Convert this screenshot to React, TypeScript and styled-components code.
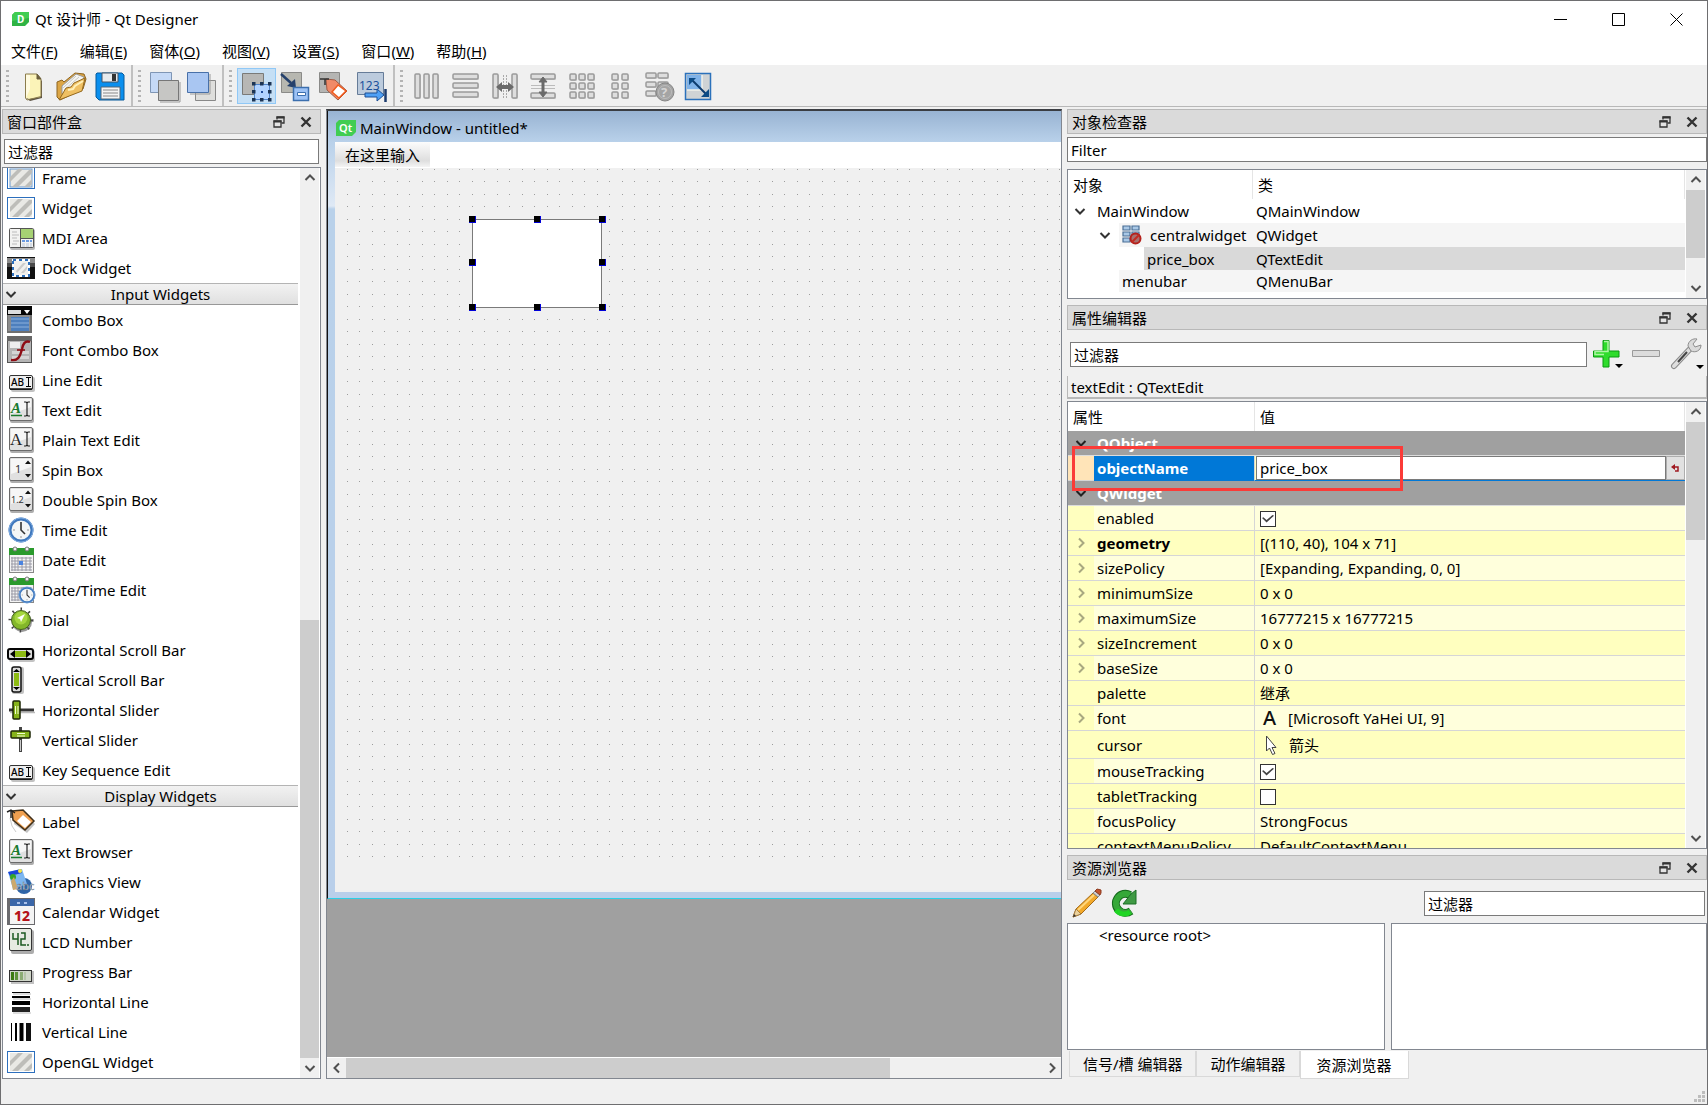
import React from "react";
import styled, { createGlobalStyle, css } from "styled-components";

const Global = createGlobalStyle`
  * { box-sizing: border-box; }
  html, body, #root { margin: 0; height: 100%; }
  body {
    font-family: "Noto Sans", "Noto Sans CJK SC", sans-serif;
    font-size: 15px;
    line-height: 20px;
    color: #000;
    overflow: hidden;
  }
  button, input { font: inherit; color: inherit; }
  button { border: 0; background: none; padding: 0; }
  svg { display: block; flex: none; overflow: visible; }
  svg text { font-family: "Noto Sans", sans-serif; }
`;

/* ---------- window shell ---------- */

const Window = styled.div`
  height: 100vh;
  display: flex;
  flex-direction: column;
  background: #f0f0f0;
  border: 1px solid #6e6e70;
`;

const TitleBar = styled.header`
  height: 34px;
  flex: none;
  display: flex;
  align-items: center;
  background: #fff;
  padding: 2px 2px 0 11px;
`;

const AppTitle = styled.h1`
  flex: 1;
  margin: 0 0 0 6px;
  font-size: 15px;
  font-weight: 400;
  line-height: 20px;
`;

const CaptionButton = styled.button`
  width: 58px;
  height: 32px;
  display: grid;
  place-items: center;
`;

const MenuBar = styled.nav`
  height: 30px;
  flex: none;
  display: flex;
  align-items: flex-end;
  background: #fff;
`;

const MenuItem = styled.button`
  padding: 0 12px 0 10px;
  height: 28px;
`;

const ToolBar = styled.div`
  height: 42px;
  flex: none;
  display: flex;
  border-bottom: 1px solid #b8b8b8;
`;

const ToolGroup = styled.div<{ $last?: boolean }>`
  display: flex;
  align-items: center;
  padding: 0 2px 0 5px;
  border-right: ${(p) => (p.$last ? "0" : "2px solid #c0c0c0")};
`;

const Handle = styled.span`
  width: 3px;
  height: 32px;
  margin-right: 5px;
  background: repeating-linear-gradient(#b4b4b4 0 2px, transparent 2px 5px);
`;

const ToolButtons = styled.div<{ $count: number; $width: number }>`
  display: grid;
  grid-template-columns: repeat(${(p) => p.$count}, 1fr);
  width: ${(p) => p.$width}px;
`;

const ToolButton = styled.button<{ $active?: boolean }>`
  height: 36px;
  display: grid;
  place-items: center;
  ${(p) =>
    p.$active &&
    css`
      background: #c5dff5;
      box-shadow: inset 0 0 0 1px #90c8f6;
    `}
`;

const Workspace = styled.main`
  flex: 1;
  min-height: 0;
  display: grid;
  grid-template-columns: 319px minmax(0, 1fr) 640px;
  gap: 5px;
  padding: 2px 0 0 1px;
`;

const StatusBar = styled.footer`
  height: 25px;
  flex: none;
  display: flex;
  justify-content: flex-end;
  align-items: flex-end;
  padding: 1px 2px;
`;

/* ---------- docks ---------- */

const Column = styled.div`
  min-width: 0;
  min-height: 0;
  display: flex;
  flex-direction: column;
`;

const Dock = styled.section<{ $grow?: boolean }>`
  display: flex;
  flex-direction: column;
  flex: ${(p) => (p.$grow ? "1" : "none")};
  min-height: 0;
`;

const DockTitleBar = styled.div`
  height: 25px;
  flex: none;
  display: flex;
  align-items: center;
  gap: 15px;
  padding: 1px 8px 0 4px;
  background: #dadada;
  border: 1px solid #b8b8b8;
`;

const DockTitle = styled.h2`
  flex: 1;
  margin: 0;
  font-size: 15px;
  font-weight: 400;
  line-height: 20px;
`;

const IconButton = styled.button`
  display: block;
`;

const Filter = styled.input<{ $width?: string }>`
  height: 25px;
  flex: none;
  width: ${(p) => p.$width || "auto"};
  min-width: 0;
  padding: 0 3px;
  border: 1px solid #7a7a7a;
  background: #fff;
  outline: 0;
`;

const FilterRow = styled.div<{ $space: string }>`
  display: flex;
  flex: none;
  padding: ${(p) => p.$space};
`;

const View = styled.div<{ $grow?: boolean; $height?: number }>`
  display: flex;
  ${(p) => (p.$grow ? "flex: 1; min-height: 0;" : `flex: none; height: ${p.$height}px;`)}
  background: #fff;
  border: 1px solid #828790;
  overflow: hidden;
`;

/* ---------- scroll bars ---------- */

const ScrollTrack = styled.div<{ $horizontal?: boolean }>`
  flex: none;
  display: flex;
  flex-direction: ${(p) => (p.$horizontal ? "row" : "column")};
  ${(p) => (p.$horizontal ? "height: 21px; border-top: 1px solid #fff;" : "width: 20px; border-right: 1px solid #fff;")}
  background: #f0f0f0;
`;

const ScrollArrow = styled.button`
  width: 19px;
  height: 20px;
  flex: none;
  display: grid;
  place-items: center;
`;

const ScrollPart = styled.span<{ $size: number; $thumb?: boolean }>`
  flex: ${(p) => p.$size} 1 0;
  background: ${(p) => (p.$thumb ? "#cdcdcd" : "transparent")};
`;

type Dir = "up" | "down" | "left" | "right";
const turn: Record<Dir, number> = { down: 0, left: 90, up: 180, right: 270 };

const Chevron = ({ dir, color = "#505050" }: { dir: Dir; color?: string }) => (
  <svg width="12" height="12" viewBox="0 0 12 12">
    <path d="M1.5 4 6 8.5 10.5 4" fill="none" stroke={color} strokeWidth="2" transform={`rotate(${turn[dir]} 6 6)`} />
  </svg>
);

const ScrollBar = ({ parts, horizontal }: { parts: [number, number, number]; horizontal?: boolean }) => (
  <ScrollTrack $horizontal={horizontal}>
    <ScrollArrow aria-label={horizontal ? "left" : "up"}>
      <Chevron dir={horizontal ? "left" : "up"} />
    </ScrollArrow>
    <ScrollPart $size={parts[0]} />
    <ScrollPart $size={parts[1]} $thumb />
    <ScrollPart $size={parts[2]} />
    <ScrollArrow aria-label={horizontal ? "right" : "down"}>
      <Chevron dir={horizontal ? "right" : "down"} />
    </ScrollArrow>
  </ScrollTrack>
);

const DockHeader = ({ title }: { title: string }) => (
  <DockTitleBar>
    <DockTitle>{title}</DockTitle>
    <IconButton aria-label="float">
      <svg width="12" height="12" viewBox="0 0 12 12">
        <path d="M4 3.5V1h7v6H8.5" fill="none" stroke="#333" strokeWidth="1.3" />
        <path d="M3.5 1.5h8" stroke="#333" strokeWidth="2" />
        <path d="M1 5h7v6H1z" fill="#e4e4e4" stroke="#333" strokeWidth="1.3" />
        <path d="M.5 5.500h8" stroke="#333" strokeWidth="2" />
      </svg>
    </IconButton>
    <IconButton aria-label="close">
      <svg width="12" height="12" viewBox="0 0 12 12">
        <path d="M1.5 1.5l9 9M10.5 1.5l-9 9" stroke="#333" strokeWidth="2.4" />
      </svg>
    </IconButton>
  </DockTitleBar>
);

/* ---------- widget box ---------- */

const WidgetList = styled.div`
  flex: 1;
  min-width: 0;
  display: flex;
  flex-direction: column;
  justify-content: flex-end;
  padding: 0 2px 1px 0;
  overflow: hidden;
`;

const Category = styled.button`
  height: 22px;
  flex: none;
  display: flex;
  align-items: center;
  padding: 0 2px;
  background: linear-gradient(#f2f2f2, #e0e0e0);
  border-top: 1px solid #b4b4b4;
  border-bottom: 1px solid #989898;
`;

const CategoryName = styled.span`
  flex: 1;
  line-height: 20px;
  padding-left: 8px;
`;

const WidgetRow = styled.div`
  height: 30px;
  flex: none;
  display: flex;
  align-items: center;
  gap: 7px;
  padding-left: 4px;
  white-space: nowrap;
`;

const Svg28 = ({ children }: { children: React.ReactNode }) => (
  <svg width="28" height="28" viewBox="0 0 28 28">
    {children}
  </svg>
);

const Striped = ({ framed }: { framed?: boolean }) => (
  <Svg28>
    <rect x=".5" y="3.5" width="27" height="21" fill="#fff" stroke="#2c6fbd" />
    <rect x="3" y="5" width="22" height="18" fill="#e9e9e5" stroke={framed ? "#6d9bd0" : "none"} />
    <path d="M3 13l8-8h5L3 18zM5 23 22 6h3v3L11 23zM17 23l8-8v5l-3 3z" fill="#bdbdb9" />
  </Svg28>
);

const Plate = ({ children }: { children: React.ReactNode }) => (
  <Svg28>
    <rect x="3" y="2" width="24" height="25" rx="2" fill="#777" opacity=".6" />
    <rect x="2.5" y="1.5" width="23" height="23" rx="1.5" fill="#e0e0e0" stroke="#6a6a6a" />
    <path d="M4 3h20v8L4 18z" fill="#f6f6f6" />
    {children}
  </Svg28>
);

const IBeam = ({ x }: { x: number }) => (
  <path d={`M${x - 3} 6h2l1 1 1-1h2M${x} 7v12M${x - 3} 20h2l1-1 1 1h2`} fill="none" stroke="#222" strokeWidth="1.2" />
);

const AbiIcon = () => (
  <Svg28>
    <rect x="4" y="11" width="24" height="15" rx="2" fill="#999" opacity=".6" />
    <rect x="2.5" y="9.5" width="23" height="14" rx="1.5" fill="#eee" stroke="#333" />
    <path d="M3 23h22" stroke="#111" strokeWidth="1.5" />
    <text x="4" y="20" fontSize="10" fontWeight="500" fill="#000">AB</text>
    <path d="M19 11.5h5M21.5 12v8M19 20.5h5" stroke="#000" fill="none" />
  </Svg28>
);

const TextIcon = () => (
  <Plate>
    <text x="4" y="17" fontSize="15" fontStyle="italic" fill="#1a7a2e" style={{ fontFamily: "Liberation Serif" }} fontWeight="700">A</text>
    <path d="M4 19.5h11" stroke="#1a7a2e" strokeWidth="1.5" />
    <IBeam x={20} />
  </Plate>
);

const PlainIcon = () => (
  <Plate>
    <text x="3" y="19" fontSize="17" fill="#222" style={{ fontFamily: "Liberation Serif" }}>A</text>
    <IBeam x={20} />
  </Plate>
);

const SpinIcon = ({ n }: { n: string }) => (
  <Plate>
    <text x={n.length > 1 ? 4 : 8} y="17" fontSize={n.length > 1 ? 9 : 11} fill="#333">{n}</text>
    <path d="M18 8l3-3.5L24 8zM18 18l3 3.5 3-3.5z" fill="#111" />
  </Plate>
);

const Clock = ({ x, y, r }: { x: number; y: number; r: number }) => (
  <g transform={`translate(${x} ${y}) scale(${r / 12})`}>
    <circle r="11" fill="#f4f6f6" stroke="#3f78bd" strokeWidth="3" />
    <circle r="12" fill="none" stroke="#7fabe0" strokeWidth="1" />
    <path d="M0-8V0l4 4" fill="none" stroke="#333" strokeWidth="1.6" />
    <path d="M0 6v2M-8 0h2M6 0h2" stroke="#999" />
  </g>
);

const Calendar = () => (
  <g>
    <rect x="2.5" y="5" width="24" height="21.5" fill="#f4f4f4" stroke="#888" />
    <rect x="2" y="2" width="25" height="7" fill="#2a9a2c" />
    <path d="M4 12h21M4 15h21M4 18h21M4 21h21M4 24h21M5 11v14M8 11v14M11 11v14M15 11v14M19 11v14M23 11v14" stroke="#9a9aa6" strokeWidth="1" />
    <rect x="12" y="15" width="4" height="4" fill="#4a83e0" />
    <circle cx="8" cy="3" r="2" fill="#eee" stroke="#777" />
    <circle cx="20" cy="3" r="2" fill="#eee" stroke="#777" />
  </g>
);

const TagIcon = () => (
  <Svg28>
    <path d="M8 8l10-2 10 10-8 9-13-9z" fill="#888" opacity=".5" />
    <path d="M5 3l11-1 11 11-9 9L6 12z" fill="#f0a050" stroke="#40301a" strokeWidth="1.5" />
    <path d="M16 7l8 7-6 6-8-7z" fill="#fff" />
    <path d="M0 4l4-2 4 3M4 3v7" fill="none" stroke="#222" strokeWidth="1.4" />
    <path d="M3 10l2 8 4 6" fill="none" stroke="#ccc" />
  </Svg28>
);

const icons: Record<string, React.ReactNode> = {
  frame: <Striped framed />,
  stripe: <Striped />,
  mdi: (
    <Svg28>
      <rect x="3" y="5" width="25" height="21" rx="2" fill="#888" opacity=".6" />
      <rect x="2.5" y="4.5" width="24" height="19" rx="1" fill="#f3f3f1" stroke="#555" />
      <path d="M5 8h5M5 11h7M5 14h5M6 17h6M5 20h5" stroke="#bbb" />
      <rect x="14" y="5" width="12" height="9" fill="#a6d173" />
      <path d="M13.5 5v18M14 14.5h12" stroke="#555" />
      <path d="M15 17h10" stroke="#6a9ae0" strokeWidth="2" strokeDasharray="3 1" />
      <path d="M15 20h10M15 22h10" stroke="#b9c6da" strokeDasharray="3 1" />
    </Svg28>
  ),
  dock: (
    <Svg28>
      <path d="M0 3h28v22H0z" fill="#111" />
      <path d="M0 4h28v5H0z" fill="#8a8a8a" />
      <path d="M0 9h28v4H0z" fill="#4a4a4a" />
      <rect x="5" y="5" width="18" height="18" fill="#f0f0ee" />
      <rect x="6" y="6" width="16" height="16" fill="none" stroke="#fff" strokeWidth="2" />
      <rect x="6" y="6" width="16" height="16" fill="none" stroke="#2c6fbd" strokeWidth="2" strokeDasharray="3 3" />
      <path d="M9 17l7-8h3l-9 10zM14 19l6-7v3l-3 4z" fill="#ccc" />
    </Svg28>
  ),
  combo: (
    <Svg28>
      <rect width="25" height="27" fill="#6f6f6f" />
      <rect x="1" y="9" width="22" height="16" fill="#8c8c8c" />
      <rect width="25" height="9" fill="#050505" />
      <rect x="1" y="4" width="13" height="4" fill="#ddd" />
      <path d="M17 4h6l-3 4z" fill="#fff" />
      <rect x="4" y="11" width="18" height="14" fill="#4d7fbd" />
      <path d="M4 13h18M4 17h18M4 21h18" stroke="#8db1dc" />
    </Svg28>
  ),
  fontcombo: (
    <Svg28>
      <rect x=".5" y=".5" width="24" height="26" fill="#b4b4b4" stroke="#555" />
      <rect width="25" height="5" fill="#666" />
      <rect x="3" y="6" width="10" height="6" fill="#eee" />
      <path d="M5 15h17v3H5zM5 20h17v3H5z" fill="#d5d5d5" />
      <path d="M23 6c-5-2-7 2-8 7-2 8-4 12-11 11" fill="none" stroke="#8e0c14" strokeWidth="2.4" />
      <path d="M10 14h8" stroke="#8e0c14" strokeWidth="1.6" />
    </Svg28>
  ),
  abi: <AbiIcon />,
  text: <TextIcon />,
  plain: <PlainIcon />,
  spin: <SpinIcon n="1" />,
  dspin: <SpinIcon n="1.2" />,
  time: <Svg28><Clock x={14} y={14} r={12} /></Svg28>,
  date: <Svg28><Calendar /></Svg28>,
  datetime: <Svg28><Calendar /><Clock x={20} y={19} r={8} /></Svg28>,
  dial: (
    <Svg28>
      <circle cx="15" cy="16" r="10" fill="#555" opacity=".6" />
      <circle cx="14" cy="14" r="11" fill="none" stroke="#444" strokeWidth="3" strokeDasharray="1.5 7" />
      <circle cx="14" cy="14" r="9.5" fill="#83b72a" stroke="#45651a" />
      <circle cx="14" cy="12" r="6.5" fill="#a5d63f" />
      <path d="M18 8l-8 4 3 1 1 3z" fill="#fff" />
    </Svg28>
  ),
  hscroll: (
    <Svg28>
      <rect x="2" y="14" width="26" height="12" rx="2" fill="#888" opacity=".5" />
      <rect x="1" y="13" width="25" height="10" rx="2" fill="#ddd" stroke="#050505" strokeWidth="2" />
      <path d="M8 14v8l-5-4zM19 14v8l5-4z" fill="#000" />
      <rect x="8" y="15" width="11" height="6" fill="#8dbb12" />
    </Svg28>
  ),
  vscroll: (
    <Svg28>
      <rect x="5" y="1" width="12" height="27" rx="2" fill="#888" opacity=".5" />
      <rect x="5" y="1" width="9" height="25" rx="2" fill="#ddd" stroke="#111" strokeWidth="1.5" />
      <path d="M6 6h7L9.5 3zM6 21h7l-3.5 3z" fill="#000" />
      <rect x="7" y="7" width="5" height="13" fill="#8dbb12" />
    </Svg28>
  ),
  hslider: (
    <Svg28>
      <path d="M2 14h25" stroke="#333" strokeWidth="3" />
      <path d="M3 16.5h25" stroke="#bbb" strokeWidth="1.5" />
      <rect x="6" y="5" width="7" height="18" rx="1" fill="#86b41a" stroke="#1c2605" strokeWidth="1.5" />
      <path d="M8.5 10v8M11 10v8" stroke="#f2ffd0" />
    </Svg28>
  ),
  vslider: (
    <Svg28>
      <path d="M13.5 1v25" stroke="#444" strokeWidth="3" />
      <path d="M13.5 14v11" stroke="#ccc" strokeWidth="1" />
      <rect x="4" y="5" width="19" height="7" rx="1" fill="#86b41a" stroke="#1c2605" strokeWidth="1.5" />
      <path d="M10 7.5h8M10 10h8" stroke="#f2ffd0" />
    </Svg28>
  ),
  label: <TagIcon />,
  graphics: (
    <Svg28>
      <circle cx="17" cy="18" r="8" fill="#2f65a8" />
      <path d="M1 4l14-3 5 15-14 5z" fill="#7db7f0" />
      <path d="M1 4l13-3 1 4L3 8z" fill="#1c46d8" />
      <circle cx="6" cy="9" r="3" fill="#35a52a" />
      <circle cx="13" cy="3" r="2" fill="#f5e642" />
      <path d="M4 13l3-4 3 9 1 3-5 1z" fill="#cda96b" />
      <text x="9" y="22" fontSize="11" fill="#dfe6ee" stroke="#567" strokeWidth=".4">abc</text>
    </Svg28>
  ),
  calendar: (
    <Svg28>
      <rect width="28" height="27" fill="#6a6a6e" />
      <rect x="3" y="2" width="24" height="24" fill="#f4f4f4" />
      <rect x="3" y="1" width="24" height="7" fill="#3a66a8" />
      <path d="M10 5h3M17 5h3" stroke="#cfe0ff" strokeWidth="1.5" />
      <text x="7" y="23" fontSize="14" fontWeight="800" fill="#b51218">12</text>
    </Svg28>
  ),
  lcd: (
    <Svg28>
      <rect x="4" y="2" width="23" height="24" rx="2" fill="#777" opacity=".6" />
      <rect x="2.5" y=".5" width="22" height="22" rx="1.5" fill="#e6eae2" stroke="#333" />
      <path d="M6 5v6h5M11 5v12M14 5h4v6h-4v6h5" fill="none" stroke="#1b5a20" strokeWidth="1.5" />
      <path d="M20 17h2" stroke="#1b5a20" strokeWidth="1.5" />
    </Svg28>
  ),
  progress: (
    <Svg28>
      <rect x="4" y="13" width="23" height="13" fill="#999" opacity=".6" />
      <rect x="2.5" y="12.5" width="22" height="11" fill="#cfd5c8" stroke="#333" />
      <path d="M4 14h3v8H4z" fill="#3d7a12" />
      <path d="M8 14h3v8H8z" fill="#5e9238" />
      <path d="M13 14h3v8h-3z" fill="#8bab74" />
      <path d="M17 14h2v8h-2z" fill="#b4c4a8" />
    </Svg28>
  ),
  hline: (
    <Svg28>
      <path d="M6 6h18M6 11h18M6 25h18" stroke="#bbb" />
      <path d="M5 4.500h18" stroke="#000" />
      <path d="M5 9h18" stroke="#000" strokeWidth="2" />
      <path d="M5 15h18" stroke="#000" strokeWidth="4" />
      <path d="M5 21.5h18" stroke="#222" strokeWidth="5" />
    </Svg28>
  ),
  vline: (
    <Svg28>
      <path d="M4.5 5v18" stroke="#000" />
      <path d="M9 5v18" stroke="#000" strokeWidth="2" />
      <path d="M14.5 5v18" stroke="#000" strokeWidth="4" />
      <path d="M21.5 5v18" stroke="#111" strokeWidth="5" />
    </Svg28>
  ),
};

const sections: { title?: string; items: [string, string][] }[] = [
  { items: [["frame", "Frame"], ["stripe", "Widget"], ["mdi", "MDI Area"], ["dock", "Dock Widget"]] },
  {
    title: "Input Widgets",
    items: [
      ["combo", "Combo Box"], ["fontcombo", "Font Combo Box"], ["abi", "Line Edit"], ["text", "Text Edit"],
      ["plain", "Plain Text Edit"], ["spin", "Spin Box"], ["dspin", "Double Spin Box"], ["time", "Time Edit"],
      ["date", "Date Edit"], ["datetime", "Date/Time Edit"], ["dial", "Dial"], ["hscroll", "Horizontal Scroll Bar"],
      ["vscroll", "Vertical Scroll Bar"], ["hslider", "Horizontal Slider"], ["vslider", "Vertical Slider"],
      ["abi", "Key Sequence Edit"],
    ],
  },
  {
    title: "Display Widgets",
    items: [
      ["label", "Label"], ["text", "Text Browser"], ["graphics", "Graphics View"], ["calendar", "Calendar Widget"],
      ["lcd", "LCD Number"], ["progress", "Progress Bar"], ["hline", "Horizontal Line"], ["vline", "Vertical Line"],
      ["stripe", "OpenGL Widget"],
    ],
  },
];

const WidgetBox = () => (
  <Column>
    <DockHeader title="窗口部件盒" />
    <FilterRow $space="5px 2px 3px">
      <Filter $width="100%" aria-label="过滤器" defaultValue="过滤器" />
    </FilterRow>
    <View $grow>
      <WidgetList>
        {sections.map((s, i) => (
          <React.Fragment key={i}>
            {s.title && (
              <Category>
                <Chevron dir="down" color="#333" />
                <CategoryName>{s.title}</CategoryName>
              </Category>
            )}
            {s.items.map(([icon, name]) => (
              <WidgetRow key={name}>
                {icons[icon]}
                {name}
              </WidgetRow>
            ))}
          </React.Fragment>
        ))}
      </WidgetList>
      <ScrollBar parts={[431, 438, 0]} />
    </View>
  </Column>
);

/* ---------- tool bar ---------- */

const Svg32 = ({ children }: { children: React.ReactNode }) => (
  <svg width="32" height="32" viewBox="0 0 32 32">
    {children}
  </svg>
);

const Bar = ({ x, y, w, h }: { x: number; y: number; w: number; h: number }) => (
  <g>
    <rect x={x + 1} y={y + 1} width={w} height={h} rx="1" fill="#cfcfcf" />
    <rect x={x} y={y} width={w} height={h} rx="1" fill="#dedede" stroke="#9a9a9a" strokeWidth="1.5" />
  </g>
);

const fileTools = [
  <Svg32>
    <path d="M9 28l4 3 12-3V10z" fill="#5a5142" />
    <path d="M9 4h11l4 5v18l-12 2-3-1z" fill="#fbf3b8" />
    <path d="M9 4l4 1v14l-4 9z" fill="#fffbe0" />
    <path d="M8.5 4H20l4 5v17.5L10 30l-1.5-2z" fill="none" stroke="#8b7c4c" />
    <path d="M20 4l4 5h-4z" fill="#6b5f3c" stroke="#6b5f3c" />
  </Svg32>,
  <Svg32>
    <path d="M2 12l5-2 2 2L20 3l9 1 2 5-3 10L5 30l-3-3z" fill="#dca646" stroke="#8d6420" />
    <path d="M7 16L21 4l8 3-4 9-18 8z" fill="#f5f5f2" stroke="#999" />
    <path d="M8 18l13-12M9 20L24 7" stroke="#c9c9c4" />
    <path d="M4 30l7-12 5-1 3-4 11-5-3 13z" fill="#efc063" stroke="#94691f" />
    <path d="M13 20l5-1 2-3 8-5" fill="none" stroke="#fff0b8" strokeWidth="2" />
  </Svg32>,
  <Svg32>
    <path d="M3 3h25l2 2v25H5l-3-3V4z" fill="#0a8fee" stroke="#075a9c" />
    <path d="M8 3h16v9H8z" fill="#e7ebee" stroke="#456" />
    <path d="M18 4h4v7h-4z" fill="#333" />
    <path d="M7 17h19v12H7z" fill="#f4f4f4" stroke="#567" />
    <path d="M9 20h15M9 23h15M9 26h15" stroke="#888" />
  </Svg32>,
];

const editTools = [
  <Svg32>
    <path d="M1.5 2.5h21v20h-21z" fill="#c5d9f6" stroke="#7f96b5" />
    <path d="M9.5 10.5h20v20h-20z" fill="#c6c6c4" stroke="#777" />
    <path d="M31 12v20H11" fill="none" stroke="#999" />
  </Svg32>,
  <Svg32>
    <path d="M9.5 10.5h20v20h-20z" fill="#dededc" stroke="#888" />
    <path d="M1.5 2.5h21v20h-21z" fill="#a9c6f2" stroke="#4870a8" />
    <path d="M24 4v20H4" fill="none" stroke="#999" />
  </Svg32>,
];

const modeTools = [
  <Svg32>
    <path d="M2.5 3.5h21v21h-21z" fill="#b7b7b5" stroke="#7a7a78" />
    <path d="M14.5 14.5h15v15h-15z" fill="#b2d3ff" stroke="#4f82c8" />
    {[[14, 14], [22, 14], [30, 14], [14, 22], [30, 22], [14, 30], [22, 30], [30, 30]].map(([x, y]) => (
      <rect key={`${x}-${y}`} x={x - 2} y={y - 2} width="3.500" height="3.500" fill="#1c3454" />
    ))}
    <path d="M21 21h2v2h-2z" fill="#1c4a9a" />
  </Svg32>,
  <Svg32>
    <path d="M2.5 2.5h20v20h-20z" fill="#b7b7b0" stroke="#8a8a88" />
    <path d="M2 4l10 9" stroke="#25406b" strokeWidth="2.5" />
    <path d="M16 9l1 9-9-2z" fill="#25406b" />
    <path d="M14.500 17.500h15v13h-15z" fill="#9dc2f5" stroke="#3c6fae" strokeWidth="1.500" />
    <path d="M18.500 22.500h8v3h-8z" fill="#fff" stroke="#3c6fae" />
  </Svg32>,
  <Svg32>
    <path d="M2.500 2.500h20v20h-20z" fill="#b5b5b3" stroke="#8a8a88" />
    <path d="M9 9l9 1 12 11-9 9-11-10z" fill="#f08a68" stroke="#a05a44" />
    <path d="M21 15l8 6-7 7-7-6z" fill="#fff" stroke="#f05a1c" strokeWidth="1.500" />
    <path d="M3 9h9M8 9v6" stroke="#333" strokeWidth="1.500" />
  </Svg32>,
  <Svg32>
    <path d="M1.500 2.500h26v22h-26z" fill="#bccbdd" stroke="#667c98" />
    <text x="3" y="20" fontSize="12" fill="#1b519c">123</text>
    <path d="M9 23h12v-4l7 6-7 6v-4H9z" fill="#4fa0f5" stroke="#1c4f94" />
    <path d="M29.500 19v13" stroke="#1c3b6e" strokeWidth="2.500" />
  </Svg32>,
];

const rowsOf = (xs: number[], ys: number[], w: number, h: number) =>
  ys.flatMap((y) => xs.map((x) => <Bar key={`${x}-${y}`} x={x} y={y} w={w} h={h} />));

const layoutTools = [
  <Svg32>{rowsOf([4, 13, 22], [4], 5, 24)}</Svg32>,
  <Svg32>{rowsOf([3], [4, 13, 22], 25, 5)}</Svg32>,
  <Svg32>
    {rowsOf([4, 23], [4], 5, 24)}
    <path d="M14.5 5v24M17.5 5v24" stroke="#aaa" strokeDasharray="2 1" />
    <path d="M7 17l6-5v3h6v-3l6 5-6 5v-3h-6v3z" fill="#6a6a6a" />
  </Svg32>,
  <Svg32>
    {rowsOf([4], [4, 23], 24, 5)}
    <path d="M4 15.5h24M4 18.5h24" stroke="#bbb" />
    <path d="M16 7l4 5h-3v10h3l-4 5-4-5h3V12h-3z" fill="#6a6a6a" stroke="#6a6a6a" />
  </Svg32>,
  <Svg32>{rowsOf([4, 13, 22], [4, 13, 22], 6, 6)}</Svg32>,
  <Svg32>{rowsOf([8, 18], [4, 13, 22], 6, 6)}</Svg32>,
  <Svg32>
    {rowsOf([3, 15], [3, 12, 21], 10, 5)}
    <circle cx="22" cy="22" r="9" fill="#a4a4a4" stroke="#858585" />
    <circle cx="22" cy="22" r="6.500" fill="none" stroke="#bcbcbc" />
    <text x="18" y="27" fontSize="13" fontWeight="700" fill="#d5d5d5">?</text>
  </Svg32>,
  <Svg32>
    <path d="M3.500 3.500h25v26h-25z" fill="#cfd3d5" stroke="#2b71bb" strokeWidth="1.500" />
    <path d="M5 5h15v15H5z" fill="#7fb2e8" />
    <path d="M20 5v15H5" fill="none" stroke="#f2f2ea" strokeWidth="1.500" />
    <path d="M10 10l14 14" stroke="#0d3c6e" strokeWidth="2" />
    <path d="M7 8h7l-7 7zM27 27v-8l-8 8z" fill="#0d4c86" />
  </Svg32>,
];

const groups = [
  { name: "file", width: 115, items: fileTools },
  { name: "edit", width: 74, items: editTools },
  { name: "mode", width: 154, items: modeTools },
  { name: "layout", width: 309, items: layoutTools },
];

/* ---------- form area ---------- */

const MdiArea = styled.section`
  min-width: 0;
  display: flex;
  flex-direction: column;
  background: #a0a0a0;
  border: 1px solid #828790;
  border-top: 2px solid #3a3d42;
`;

const FormWindow = styled.div`
  height: 788px;
  flex: none;
  display: flex;
  flex-direction: column;
  padding: 0 0 6px 7px;
  background: linear-gradient(#98b3d2, #b9d1ea 31px, #dfe9f5 95px, #b9d1ea 98px, #b9cfea);
  border-left: 1px solid #111;
  border-bottom: 1px solid #2bd0e6;
`;

const FormTitle = styled.div`
  height: 31px;
  flex: none;
  display: flex;
  align-items: center;
  gap: 4px;
  margin-left: -7px;
  padding: 2px 0 0 8px;
  background: linear-gradient(#98b3d2, #b9d1ea);
`;

const FormMenu = styled.div`
  height: 26px;
  flex: none;
  background: #fff;
`;

const MenuStub = styled.button`
  height: 25px;
  padding: 0 10px;
  background: linear-gradient(#fcfcfc, #dedede 75%, #f4f4f4);
`;

const dot = "conic-gradient(from 270deg at 1px 1px, #9c9c9c 90deg, transparent 0)";

const Canvas = styled.div`
  position: relative;
  flex: 1;
  background-color: #f0f0f0;
  background-image: ${dot}, ${dot}, ${dot}, ${dot};
  background-size: 25px 25px;
  background-position: 12px 1px, 24px 1px, 12px 13px, 24px 13px;
`;

const FormStatus = styled.div`
  height: 31px;
  flex: none;
  background: #f0f0f0;
`;

const FormTextEdit = styled.textarea`
  position: absolute;
  left: 137px;
  top: 51px;
  width: 130px;
  height: 89px;
  border: 1px solid #7a7a7a;
  background: #fff;
  resize: none;
  outline: 0;
`;

const Grip = styled.span<{ $x: number; $y: number }>`
  position: absolute;
  left: ${(p) => p.$x}px;
  top: ${(p) => p.$y}px;
  width: 7px;
  height: 7px;
  background: #000;
  border-right: 1px solid #0000d8;
  border-bottom: 1px solid #0000d8;
`;

const grips: [number, number][] = [
  [134, 48], [199, 48], [264, 48], [134, 91], [264, 91], [134, 136], [199, 136], [264, 136],
];

const MdiSpace = styled.div`
  flex: 1;
`;

const QtBadge = () => (
  <svg width="20" height="16" viewBox="0 0 20 16">
    <path d="M3 0h17v12l-4 4H0V3z" fill="#41cd52" />
    <text x="3" y="12" fontSize="11" fontWeight="600" fill="#fff">Qt</text>
  </svg>
);

const FormArea = () => (
  <MdiArea>
    <FormWindow>
      <FormTitle>
        <QtBadge />
        MainWindow - untitled*
      </FormTitle>
      <FormMenu>
        <MenuStub>在这里输入</MenuStub>
      </FormMenu>
      <Canvas>
        <FormTextEdit aria-label="price_box" />
        {grips.map(([x, y]) => (
          <Grip key={`${x}-${y}`} $x={x} $y={y} />
        ))}
      </Canvas>
      <FormStatus />
    </FormWindow>
    <MdiSpace />
    <ScrollBar horizontal parts={[0, 541, 151]} />
  </MdiArea>
);

/* ---------- object inspector ---------- */

const Gap = styled.div<{ $h: number }>`
  height: ${(p) => p.$h}px;
  flex: none;
`;

const TableClip = styled.div`
  position: relative;
  flex: 1;
  min-width: 0;
  overflow: hidden;
  padding-right: 1px;
`;

const Table = styled.table`
  width: 100%;
  table-layout: fixed;
  border-spacing: 0;
  th, td { padding: 0; overflow: hidden; white-space: nowrap; }
`;

const HeadCell = styled.th<{ $width?: number }>`
  height: 29px;
  width: ${(p) => (p.$width ? `${p.$width}px` : "auto")};
  text-align: left;
  font-weight: 400;
  border-right: 1px solid #e5e5e5;
`;

const HeadLabel = styled.span`
  padding-left: 5px;
`;

const TreeRow = styled.tr<{ $h: number }>`
  height: ${(p) => p.$h}px;
`;

const TreeCell = styled.div<{ $h: number }>`
  height: ${(p) => p.$h}px;
  display: flex;
`;

const Branch = styled.span<{ $depth: number }>`
  width: ${(p) => 26 + p.$depth * 25}px;
  flex: none;
  display: flex;
  align-items: center;
  justify-content: flex-end;
  padding-right: 8px;
`;

const Node = styled.span<{ $bg: string }>`
  flex: 1;
  min-width: 0;
  display: flex;
  align-items: center;
  gap: 8px;
  padding-left: 3px;
  background: ${(p) => p.$bg};
`;

const ClassCell = styled.td<{ $bg: string }>`
  background: ${(p) => p.$bg};
`;

const ClassName = styled.span`
  padding-left: 3px;
`;

const objects = [
  { name: "MainWindow", cls: "QMainWindow", depth: 0, h: 24, bg: "#fff", open: true },
  { name: "centralwidget", cls: "QWidget", depth: 1, h: 24, bg: "#f5f5f5", open: true, icon: true },
  { name: "price_box", cls: "QTextEdit", depth: 2, h: 23, bg: "#d9d9d9" },
  { name: "menubar", cls: "QMenuBar", depth: 1, h: 22, bg: "#f5f5f5" },
  { name: "statusbar", cls: "QStatusBar", depth: 1, h: 22, bg: "#fff" },
];

const NoLayoutIcon = () => (
  <svg width="20" height="20" viewBox="0 0 20 20">
    <path d="M1 1h7v4H1zM10 1h7v4h-7zM1 7h7v4H1zM10 7h7v4h-7zM1 13h7v4H1z" fill="#a9c8e6" stroke="#4a6f96" strokeWidth="1.200" />
    <circle cx="13.500" cy="13.500" r="5" fill="#a8716f" stroke="#b5211c" strokeWidth="2" />
    <path d="M10 17l7-7" stroke="#c22a22" strokeWidth="2" />
  </svg>
);

const ObjectInspector = () => (
  <Dock>
    <DockHeader title="对象检查器" />
    <FilterRow $space="3px 0 7px">
      <Filter $width="100%" aria-label="Filter" defaultValue="Filter" />
    </FilterRow>
    <View $height={130}>
      <TableClip>
        <Table>
          <thead>
            <tr>
              <HeadCell $width={185}><HeadLabel>对象</HeadLabel></HeadCell>
              <HeadCell><HeadLabel>类</HeadLabel></HeadCell>
            </tr>
          </thead>
          <tbody>
            {objects.map((o) => (
              <TreeRow key={o.name} $h={o.h}>
                <td>
                  <TreeCell $h={o.h}>
                    <Branch $depth={o.depth}>{o.open && <Chevron dir="down" color="#333" />}</Branch>
                    <Node $bg={o.bg}>
                      {o.icon && <NoLayoutIcon />}
                      {o.name}
                    </Node>
                  </TreeCell>
                </td>
                <ClassCell $bg={o.bg}><ClassName>{o.cls}</ClassName></ClassCell>
              </TreeRow>
            ))}
          </tbody>
        </Table>
      </TableClip>
      <ScrollBar parts={[0, 68, 20]} />
    </View>
  </Dock>
);

/* ---------- property editor ---------- */

const PropertyTools = styled.div`
  height: 46px;
  flex: none;
  display: flex;
  align-items: center;
  gap: 6px;
  padding: 2px 0 0 3px;
`;

const GrowFilter = styled(Filter)`
  flex: 1;
`;

const ObjectLabel = styled.div`
  height: 23px;
  flex: none;
  margin-bottom: 2px;
  padding-left: 3px;
  line-height: 22px;
  border: solid #b8b8b8;
  border-width: 0 1px 2px;
`;

const GroupRow = styled.tr`
  height: 25px;
  background: #a0a0a0;
  color: #fff;
  font-weight: 700;
`;

const GroupCell = styled.td`
  border-bottom: 1px solid #dcdcdc;
`;

const PropertyRow = styled.tr<{ $h: number; $alt: boolean }>`
  height: ${(p) => p.$h}px;
  background: ${(p) => (p.$alt ? "#ffffbf" : "#ffffdc")};
`;

const cellBorder = css`
  border-bottom: 1px solid #d6d6d6;
`;

const ExpandCell = styled.td<{ $bg?: string }>`
  ${cellBorder}
  background: ${(p) => p.$bg || "#ffffbf"};
`;

const Centered = styled.span`
  display: grid;
  place-items: center;
`;

const NameCell = styled.td<{ $bold?: boolean; $selected?: boolean }>`
  ${cellBorder}
  border-right: 1px solid #d6d6d6;
  font-weight: ${(p) => (p.$bold ? 700 : 400)};
  ${(p) => p.$selected && "background: #0078d7; color: #fff; border-bottom-color: #0078d7;"}
`;

const Inset = styled.span`
  padding-left: 3px;
`;

const ValueCell = styled.td<{ $selected?: boolean }>`
  ${cellBorder}
  ${(p) => p.$selected && "border-bottom-color: #0078d7;"}
`;

const ValueBox = styled.span`
  display: flex;
  align-items: center;
  gap: 9px;
  padding-left: 5px;
`;

const Editor = styled.div`
  display: flex;
  height: 24px;
  padding-left: 1px;
`;

const EditorInput = styled.input`
  flex: 1;
  min-width: 0;
  padding: 0 3px;
  border: 1px solid #7a7a7a;
  background: #fff;
  outline: 0;
`;

const ResetButton = styled.button`
  width: 19px;
  display: grid;
  place-items: center;
  background: #e1e1e1;
  border: 1px solid #adadad;
`;

const CheckBox = styled.input`
  appearance: none;
  position: relative;
  width: 16px;
  height: 16px;
  margin: 1px 0 0;
  border: 1px solid #333;
  background: #fff;
  &:checked::after {
    content: "";
    position: absolute;
    inset: 3px 1px 3px 1px;
    background: #444;
    clip-path: polygon(0 45%, 12% 35%, 38% 68%, 88% 5%, 100% 15%, 38% 100%);
  }
`;

const Highlight = styled.div`
  position: absolute;
  left: 4px;
  top: 44px;
  width: 331px;
  height: 45px;
  border: 3px solid #fb3b38;
  pointer-events: none;
`;

type Prop = { name: string; value?: string; check?: boolean; expand?: boolean; bold?: boolean; icon?: React.ReactNode; h?: number };

const LetterIcon = () => (
  <svg width="19" height="20" viewBox="0 0 19 20">
    <text x="3" y="17" fontSize="20" fontWeight="500" fill="#111">A</text>
  </svg>
);

const CursorIcon = () => (
  <svg width="20" height="20" viewBox="0 0 20 20">
    <path d="M6.500 1v15l3-3 3 6.500 2.500-1-3-6h4z" fill="#fff" stroke="#444" />
  </svg>
);

const properties: Prop[] = [
  { name: "enabled", check: true },
  { name: "geometry", value: "[(110, 40), 104 x 71]", expand: true, bold: true },
  { name: "sizePolicy", value: "[Expanding, Expanding, 0, 0]", expand: true },
  { name: "minimumSize", value: "0 x 0", expand: true },
  { name: "maximumSize", value: "16777215 x 16777215", expand: true },
  { name: "sizeIncrement", value: "0 x 0", expand: true },
  { name: "baseSize", value: "0 x 0", expand: true },
  { name: "palette", value: "继承" },
  { name: "font", value: "[Microsoft YaHei UI, 9]", expand: true, icon: <LetterIcon /> },
  { name: "cursor", value: "箭头", icon: <CursorIcon />, h: 28 },
  { name: "mouseTracking", check: true },
  { name: "tabletTracking", check: false },
  { name: "focusPolicy", value: "StrongFocus" },
  { name: "contextMenuPolicy", value: "DefaultContextMenu" },
];

const GroupHeader = ({ name }: { name: string }) => (
  <GroupRow>
    <GroupCell><Centered><Chevron dir="down" color="#222" /></Centered></GroupCell>
    <GroupCell colSpan={2}><Inset>{name}</Inset></GroupCell>
  </GroupRow>
);

const PropertyEditor = () => (
  <Dock $grow>
    <DockHeader title="属性编辑器" />
    <PropertyTools>
      <GrowFilter aria-label="过滤器" defaultValue="过滤器" />
      <IconButton aria-label="add property">
        <svg width="32" height="32" viewBox="0 0 32 32">
          <path d="M10 2.500h6v10.500h10v6H16v10h-6V19H.5v-6H10z" fill="#2fdc2c" stroke="#0a9a10" />
          <path d="M11 3.500h4v10H2v3h9" fill="none" stroke="#aef5a4" strokeWidth="1.500" />
          <path d="M22 26h8l-4 4z" fill="#000" />
        </svg>
      </IconButton>
      <IconButton aria-label="remove property">
        <svg width="32" height="32" viewBox="0 0 32 32">
          <path d="M1.500 12.500h27v6h-27z" fill="#dcdcdc" stroke="#9a9a9a" />
        </svg>
      </IconButton>
      <IconButton aria-label="configure">
        <svg width="38" height="32" viewBox="0 0 38 32">
          <path d="M5 28L20 12" stroke="#8a8a8a" strokeWidth="6" strokeLinecap="round" />
          <path d="M5 28L20 12" stroke="#dedede" strokeWidth="4" strokeLinecap="round" />
          <path d="M9 24l9-10" stroke="#444" strokeWidth="2" />
          <path d="M19 8c0-5 5-8 9-7l-4 5 2 3 6-2c0 6-6 8-10 6z" fill="#dadada" stroke="#8d8d8d" />
          <path d="M27 27h8l-4 4z" fill="#000" />
        </svg>
      </IconButton>
    </PropertyTools>
    <ObjectLabel>textEdit : QTextEdit</ObjectLabel>
    <View $grow>
      <TableClip>
        <Table>
          <colgroup>
            <col width="26" />
            <col width="161" />
            <col />
          </colgroup>
          <thead>
            <tr>
              <HeadCell colSpan={2}><HeadLabel>属性</HeadLabel></HeadCell>
              <HeadCell><HeadLabel>值</HeadLabel></HeadCell>
            </tr>
          </thead>
          <tbody>
            <GroupHeader name="QObject" />
            <PropertyRow $h={25} $alt>
              <ExpandCell $bg="#ffe4b8" />
              <NameCell $bold $selected><Inset>objectName</Inset></NameCell>
              <ValueCell $selected>
                <Editor>
                  <EditorInput aria-label="objectName" defaultValue="price_box" />
                  <ResetButton aria-label="reset">
                    <svg width="9" height="9" viewBox="0 0 9 9">
                      <path d="M4 0v6L0 3z" fill="#a01820" />
                      <path d="M3 3h4v4H4" fill="none" stroke="#a01820" strokeWidth="1.500" />
                    </svg>
                  </ResetButton>
                </Editor>
              </ValueCell>
            </PropertyRow>
            <GroupHeader name="QWidget" />
            {properties.map((p, i) => (
              <PropertyRow key={p.name} $h={p.h || 25} $alt={i % 2 === 1}>
                <ExpandCell>{p.expand && <Centered><Chevron dir="right" color="#a8a880" /></Centered>}</ExpandCell>
                <NameCell $bold={p.bold}><Inset>{p.name}</Inset></NameCell>
                <ValueCell>
                  <ValueBox>
                    {p.icon}
                    {p.value ?? <CheckBox type="checkbox" aria-label={p.name} defaultChecked={p.check} />}
                  </ValueBox>
                </ValueCell>
              </PropertyRow>
            ))}
          </tbody>
        </Table>
        <Highlight />
      </TableClip>
      <ScrollBar parts={[0, 118, 287]} />
    </View>
  </Dock>
);

/* ---------- resource browser ---------- */

const ResourceTools = styled.div`
  height: 43px;
  flex: none;
  display: flex;
  align-items: center;
  gap: 4px;
  padding: 3px 2px 0 5px;
`;

const Spring = styled.div`
  flex: 1;
`;

const Panels = styled.div`
  display: grid;
  grid-template-columns: 318px 1fr;
  gap: 6px;
`;

const RootLabel = styled.span`
  padding: 1px 31px;
`;

const Tabs = styled.div`
  display: flex;
  align-items: flex-start;
  height: 29px;
  padding: 1px 2px 0;
`;

const Tab = styled.button<{ $active?: boolean }>`
  height: ${(p) => (p.$active ? 28 : 26)}px;
  padding: ${(p) => (p.$active ? "0 16px" : "0 13px")};
  line-height: 24px;
  border: solid #d9d9d9;
  border-width: 0 1px 1px 1px;
  background: ${(p) => (p.$active ? "#fff" : "#f0f0f0")};
  & + & { border-left-width: ${(p) => (p.$active ? 1 : 0)}px; }
`;

const ResourceBrowser = () => (
  <Dock>
    <DockHeader title="资源浏览器" />
    <ResourceTools>
      <IconButton aria-label="edit resources">
        <svg width="32" height="32" viewBox="0 0 32 32">
          <path d="M1 30l3-8L21 6l5 4L9 27z" fill="#f2a92a" stroke="#a36a18" />
          <path d="M6 23L22 8" stroke="#ffd67c" strokeWidth="2" />
          <path d="M1 30l3-8 5 5z" fill="#ecd29c" stroke="#99713a" strokeWidth=".8" />
          <path d="M1 30l1-3 2 2z" fill="#333" />
          <path d="M21 6l2-2 5 4-2 2z" fill="#cfcfcf" stroke="#888" />
          <path d="M23 4l2-2 4 1v3l-1 2z" fill="#c4552e" stroke="#8d3b20" />
        </svg>
      </IconButton>
      <IconButton aria-label="reload">
        <svg width="32" height="32" viewBox="0 0 32 32">
          <path d="M23 24a9.500 9.500 0 1 1-1-16" fill="none" stroke="#156a1c" strokeWidth="8" />
          <path d="M23 24a9.500 9.500 0 1 1-1-16" fill="none" stroke="#35a838" strokeWidth="6" />
          <path d="M8 23a10 10 0 0 0 14 2" fill="none" stroke="#20d524" strokeWidth="5" />
          <path d="M28 3v14H15l4-5 4-5z" fill="#3f9a44" stroke="#1b6e24" />
        </svg>
      </IconButton>
      <Spring />
      <Filter $width="281px" aria-label="过滤器" defaultValue="过滤器" />
    </ResourceTools>
    <Panels>
      <View $height={127}><RootLabel>&lt;resource root&gt;</RootLabel></View>
      <View $height={127} />
    </Panels>
    <Tabs>
      <Tab>信号/槽 编辑器</Tab>
      <Tab>动作编辑器</Tab>
      <Tab $active>资源浏览器</Tab>
    </Tabs>
  </Dock>
);

const menus = [
  ["文件", "F"], ["编辑", "E"], ["窗体", "O"], ["视图", "V"], ["设置", "S"], ["窗口", "W"], ["帮助", "H"],
];

export default function App() {
  return (
    <>
      <Global />
      <Window>
        <TitleBar>
          <svg width="17" height="16" viewBox="0 0 17 16">
            <path d="M3 1h14v10l-4 4H0V4z" fill="#2fb344" />
            <path d="M3 1h14v6L0 10V4z" fill="#41cd52" />
            <text x="5" y="12" fontSize="10" fontWeight="700" fill="#fff">D</text>
          </svg>
          <AppTitle>Qt 设计师 - Qt Designer</AppTitle>
          <CaptionButton aria-label="minimize">
            <svg width="13" height="13" viewBox="0 0 13 13"><path d="M0 6.500h13" stroke="#000" /></svg>
          </CaptionButton>
          <CaptionButton aria-label="maximize">
            <svg width="13" height="13" viewBox="0 0 13 13"><path d="M.5.500h12v12H.5z" fill="none" stroke="#000" /></svg>
          </CaptionButton>
          <CaptionButton aria-label="close">
            <svg width="13" height="13" viewBox="0 0 13 13"><path d="M.5.500l12 12M12.500.500l-12 12" stroke="#000" /></svg>
          </CaptionButton>
        </TitleBar>
        <MenuBar>
          {menus.map(([label, key]) => (
            <MenuItem key={key}>
              {label}(<u>{key}</u>)
            </MenuItem>
          ))}
        </MenuBar>
        <ToolBar>
          {groups.map((g, gi) => (
            <ToolGroup key={g.name} $last={gi === groups.length - 1}>
              <Handle />
              <ToolButtons $count={g.items.length} $width={g.width}>
                {g.items.map((icon, i) => (
                  <ToolButton key={i} aria-label={`${g.name} ${i + 1}`} $active={g.name === "mode" && i === 0}>
                    {icon}
                  </ToolButton>
                ))}
              </ToolButtons>
            </ToolGroup>
          ))}
        </ToolBar>
        <Workspace>
          <WidgetBox />
          <FormArea />
          <Column>
            <ObjectInspector />
            <Gap $h={6} />
            <PropertyEditor />
            <Gap $h={6} />
            <ResourceBrowser />
          </Column>
        </Workspace>
        <StatusBar>
          <svg width="12" height="12" viewBox="0 0 12 12">
            <path d="M9 0h3v3H9zM9 4h3v3H9zM9 8h3v3H9zM5 4h3v3H5zM5 8h3v3H5zM1 8h3v3H1z" fill="#bdbdbd" />
          </svg>
        </StatusBar>
      </Window>
    </>
  );
}
